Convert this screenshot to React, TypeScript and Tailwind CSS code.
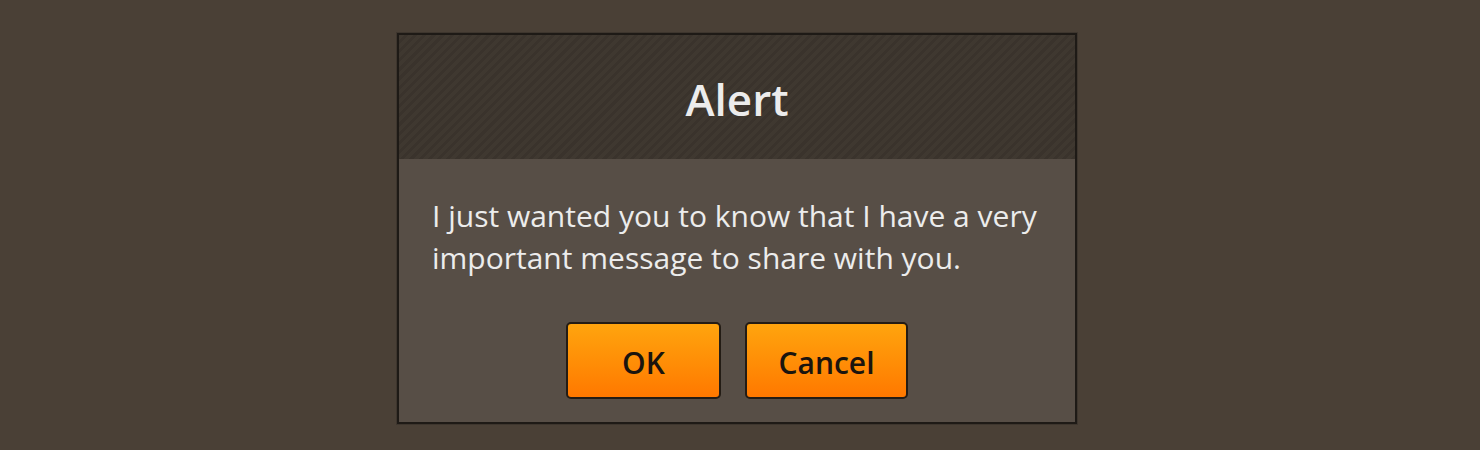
export default function App() {
  return (
    <div className="flex h-[450px] w-full items-start justify-center bg-[#4a4036] pt-[33px] pr-[6px] font-['Open_Sans',sans-serif]">
      <div className="flex h-[391px] w-[680px] flex-col border-2 border-[#1e1a16] bg-[#574e46] shadow-[0_0_0_1px_#3e362e]">
        {/* Header */}
        <div className="flex h-[124px] items-center justify-center bg-[#3a332c] bg-[repeating-linear-gradient(-45deg,#3a332c_0px,#3a332c_3px,#3f3830_3px,#3f3830_6.5px)] pt-[3px]">
          <h1 className="text-[44px] font-semibold leading-none text-[#ececec]">Alert</h1>
        </div>

        {/* Body */}
        <div className="flex flex-1 flex-col px-[33px] pt-[36px]">
          <p className="text-[30px] leading-[42px] text-[#ececec]">
            I just wanted you to know that I have a very important message to share with you.
          </p>
          <div className="mt-auto mb-[23px] flex justify-center gap-[24px]">
            <button className="h-[77px] w-[155px] rounded-[5px] border-2 border-[#231c15] bg-gradient-to-b from-[#ffa40e] to-[#ff7800] pt-[4px] text-[30px] font-semibold text-[#1a140e]">
              OK
            </button>
            <button className="h-[77px] w-[163px] rounded-[5px] border-2 border-[#231c15] bg-gradient-to-b from-[#ffa40e] to-[#ff7800] pt-[4px] text-[30px] font-semibold text-[#1a140e]">
              Cancel
            </button>
          </div>
        </div>
      </div>
    </div>
  );
}
